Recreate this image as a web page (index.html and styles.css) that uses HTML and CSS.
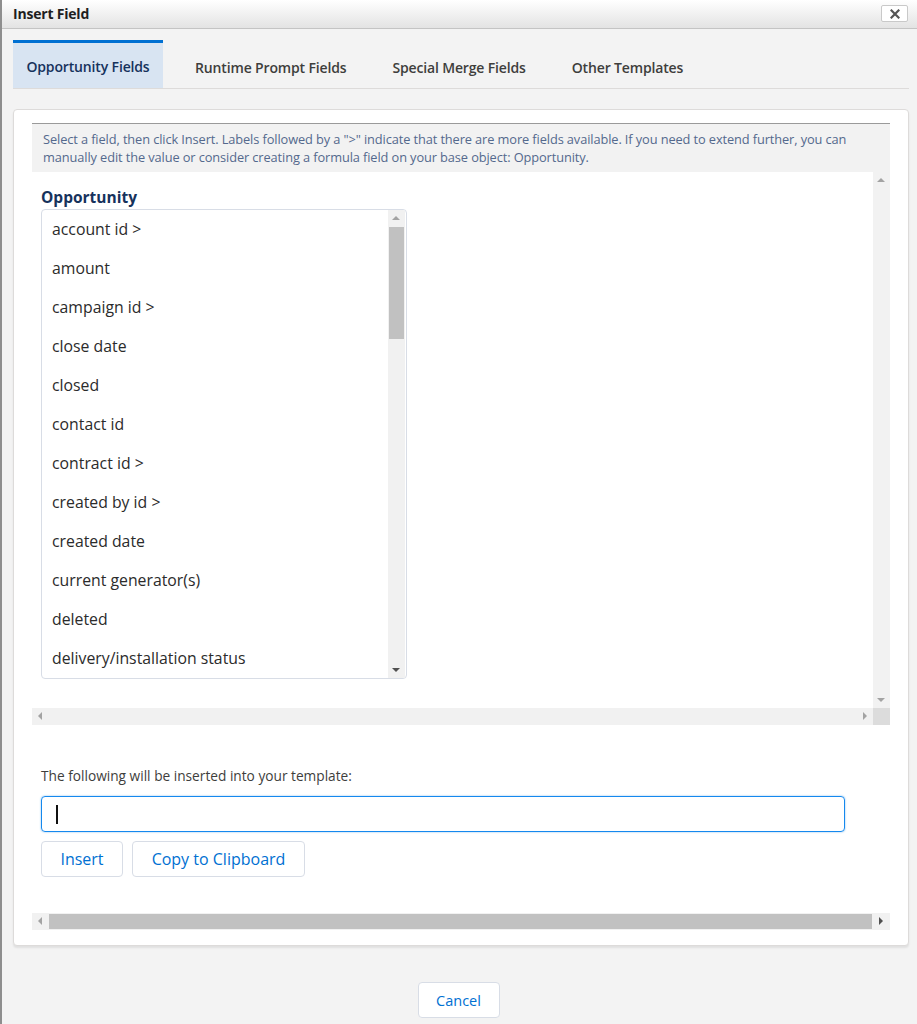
FILE: index.html
```html
<!DOCTYPE html>
<html lang="en">
<head>
<meta charset="utf-8">
<title>Insert Field</title>
<link rel="stylesheet" href="styles.css">
</head>
<body>
<div class="dialog">
  <header class="titlebar">
    <h1 class="title">Insert Field</h1>
    <button class="close" aria-label="Close">
      <svg width="10" height="10" viewBox="0 0 10 10"><path d="M1.5 1.5 L8.5 8.5 M8.5 1.5 L1.5 8.5" stroke="#555" stroke-width="2.2" stroke-linecap="square"/></svg>
    </button>
  </header>

  <main class="main">
    <nav class="tabs">
      <div class="tab active">Opportunity Fields</div>
      <div class="tab">Runtime Prompt Fields</div>
      <div class="tab">Special Merge Fields</div>
      <div class="tab">Other Templates</div>
    </nav>

    <section class="card">
      <div class="scrollbox">
        <p class="desc">Select a field, then click Insert. Labels followed by a "&gt;" indicate that there are more fields available. If you need to extend further, you can manually edit the value or consider creating a formula field on your base object: Opportunity.</p>
        <div class="scroll-row">
          <div class="content">
            <h2 class="obj">Opportunity</h2>
            <div class="listbox">
              <ul class="items">
                <li>account id &gt;</li>
                <li>amount</li>
                <li>campaign id &gt;</li>
                <li>close date</li>
                <li>closed</li>
                <li>contact id</li>
                <li>contract id &gt;</li>
                <li>created by id &gt;</li>
                <li>created date</li>
                <li>current generator(s)</li>
                <li>deleted</li>
                <li>delivery/installation status</li>
              </ul>
              <div class="vbar small">
                <div class="arrow up"></div>
                <div class="track"><div class="thumb"></div></div>
                <div class="arrow down"></div>
              </div>
            </div>
          </div>
          <div class="vbar">
            <div class="arrow up"></div>
            <div class="track"></div>
            <div class="arrow down"></div>
          </div>
        </div>
        <div class="hbar">
          <div class="harrow left"></div>
          <div class="htrack"></div>
          <div class="harrow right"></div>
          <div class="corner"></div>
        </div>
      </div>

      <div class="form">
        <label class="label" for="val">The following will be inserted into your template:</label>
        <div class="input" id="val"><span class="caret"></span></div>
        <div class="buttons">
          <button class="btn insert">Insert</button>
          <button class="btn copy">Copy to Clipboard</button>
        </div>
      </div>

      <div class="hbar bottom">
        <div class="harrow left"></div>
        <div class="htrack"><div class="hthumb"></div></div>
        <div class="harrow right dark"></div>
      </div>
    </section>

    <div class="footer">
      <button class="btn cancel">Cancel</button>
    </div>
  </main>
</div>
</body>
</html>
```

FILE: styles.css
```css
* { box-sizing: border-box; }
html, body { margin: 0; padding: 0; }
body {
  background: #f3f3f3;
  font-family: "Open Sans", "Liberation Sans", sans-serif;
  color: #3e3e3c;
}
.dialog {
  min-height: 1024px;
  border-left: 2px solid #8e8e8e;
}
.titlebar {
  height: 29px;
  background: linear-gradient(#ffffff, #e3e3e3);
  border-bottom: 1px solid #c4c4c4;
  display: flex;
  align-items: center;
  justify-content: space-between;
  padding: 0 9px 0 11px;
}
.title {
  margin: -2px 0 0;
  font-size: 14px;
  font-weight: 700;
  color: #1e1e1e;
  letter-spacing: -0.2px;
}
.close {
  width: 27px;
  height: 17px;
  margin-top: -1px;
  padding: 0;
  background: #fff;
  border: 1px solid #c9c9c9;
  border-radius: 2px;
  display: flex;
  align-items: center;
  justify-content: center;
}
.main {
  padding: 11px 8px 0 11px;
}
.tabs {
  display: flex;
  gap: 18px;
  height: 49px;
  border-bottom: 1px solid #dddbda;
}
.tab {
  height: 48px;
  padding: 6px 14px 0;
  display: flex;
  align-items: center;
  font-size: 14px;
  font-weight: 600;
  color: #3e3e3c;
  letter-spacing: -0.15px;
}
.tab.active {
  width: 150px;
  justify-content: center;
  padding: 2px 0 0;
  border-top: 3px solid #0070d2;
  background: #d8e4f2;
  color: #16325c;
}
.card {
  margin-top: 20px;
  background: #fff;
  border: 1px solid #dddbda;
  border-radius: 4px;
  box-shadow: 0 2px 2px rgba(0,0,0,0.08);
  padding: 13px 18px 15px 18px;
}
.scrollbox {
  background: #f2f2f2;
  border-top: 1px solid #9a9a9a;
}
.desc {
  margin: 0;
  padding: 6px 11px 6px 11px;
  font-size: 12.8px;
  line-height: 18px;
  color: #54698d;
  letter-spacing: -0.1px;
}
.scroll-row {
  display: flex;
  height: 536px;
}
.content {
  flex: 1;
  background: #fff;
  padding: 15px 0 0 9px;
}
.obj {
  margin: 0 0 2px;
  font-size: 15.5px;
  line-height: 20px;
  font-weight: 700;
  color: #16325c;
}
.listbox {
  width: 366px;
  height: 470px;
  border: 1px solid #d8dde6;
  border-radius: 4px;
  display: flex;
  overflow: hidden;
}
.items {
  flex: 1;
  list-style: none;
  margin: 0;
  padding: 0;
}
.items li {
  height: 39px;
  line-height: 39px;
  padding-left: 10px;
  font-size: 15.8px;
  color: #2b2b2b;
  white-space: nowrap;
}
.vbar {
  width: 17px;
  display: flex;
  flex-direction: column;
  background: #f2f2f2;
}
.vbar.small {
  background: #f1f1f1;
  margin-right: 1px;
}
.vbar .track { flex: 1; padding: 0 1px; }
.vbar .thumb {
  height: 112px;
  background: #c1c1c1;
}
.arrow {
  height: 17px;
  position: relative;
}
.arrow::after {
  content: "";
  position: absolute;
  left: 4px;
  top: 6px;
  border-left: 4px solid transparent;
  border-right: 4px solid transparent;
}
.arrow.up::after { border-bottom: 4px solid #a3a3a3; }
.arrow.down::after { border-top: 4px solid #a3a3a3; top: 7px; }
.vbar.small .arrow.down::after { border-top-color: #505050; }
.hbar {
  display: flex;
  height: 17px;
  background: #f1f1f1;
}
.htrack { flex: 1; padding: 1px 0; }
.hthumb { height: 100%; background: #c1c1c1; }
.harrow {
  width: 17px;
  position: relative;
}
.harrow::after {
  content: "";
  position: absolute;
  top: 4px;
  border-top: 4px solid transparent;
  border-bottom: 4px solid transparent;
}
.harrow.left::after { left: 6px; border-right: 4px solid #a3a3a3; }
.harrow.right::after { left: 7px; border-left: 4px solid #a3a3a3; }
.harrow.right.dark::after { border-left-color: #505050; }
.corner { width: 17px; background: #dcdcdc; }
.hbar.bottom .harrow.right { width: 18px; }
.form {
  padding: 42px 0 0 9px;
}
.label {
  display: block;
  font-size: 13.7px;
  line-height: 18px;
  color: #3e3e3c;
}
.input {
  margin-top: 11px;
  width: 804px;
  height: 36px;
  border: 1px solid #1589ee;
  border-radius: 4px;
  box-shadow: 0 0 2px #7fb8ea;
  display: flex;
  align-items: center;
  padding-left: 14px;
}
.caret {
  width: 1.5px;
  height: 19px;
  background: #111;
}
.buttons {
  display: flex;
  gap: 9px;
  margin-top: 9px;
}
.btn {
  height: 36px;
  background: #fff;
  border: 1px solid #d8dde6;
  border-radius: 4px;
  font-family: "Open Sans", "Liberation Sans", sans-serif;
  font-size: 16px;
  color: #0070d2;
  padding: 0;
}
.btn.insert { width: 82px; }
.btn.copy { width: 173px; }
.form + .hbar { margin-top: 36px; }
.footer {
  display: flex;
  justify-content: center;
  padding-top: 36px;
}
.btn.cancel {
  width: 82px;
  font-size: 14.5px;
  margin-left: -5px;
}
```
